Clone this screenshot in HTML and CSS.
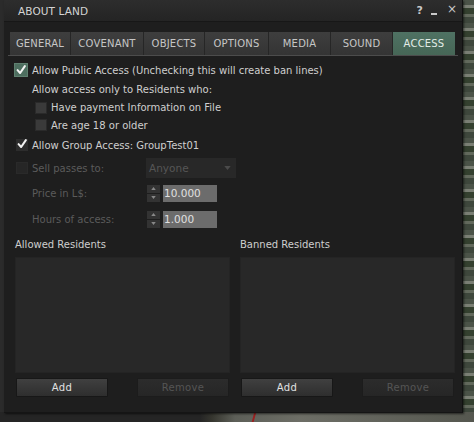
FILE: index.html
```html
<!DOCTYPE html>
<html>
<head>
<meta charset="utf-8">
<link rel="stylesheet" href="styles.css">
</head>
<body>
<div class="scene">
  <div class="floater">
    <div class="titlebar">
      <span class="title">ABOUT LAND</span>
      <div class="title-btns">
        <span class="tb-help">?</span>
        <span class="tb-min"></span>
        <span class="tb-close">×</span>
      </div>
    </div>
    <div class="tabs">
      <div class="tab t-general">GENERAL</div>
      <div class="tab t-covenant">COVENANT</div>
      <div class="tab t-objects">OBJECTS</div>
      <div class="tab t-options">OPTIONS</div>
      <div class="tab t-media">MEDIA</div>
      <div class="tab t-sound">SOUND</div>
      <div class="tab t-access active">ACCESS</div>
    </div>
    <div class="panel">
      <div class="row r-public">
        <span class="cb cb-green"><svg viewBox="0 0 14 14"><path d="M3 7.2 L6 10.5 L11.5 2.5" /></svg></span>
        <span class="lbl">Allow Public Access (Unchecking this will create ban lines)</span>
      </div>
      <div class="row r-only">
        <span class="lbl indent">Allow access only to Residents who:</span>
      </div>
      <div class="row r-pay">
        <span class="cb cb-small"></span>
        <span class="lbl">Have payment Information on File</span>
      </div>
      <div class="row r-age">
        <span class="cb cb-small"></span>
        <span class="lbl">Are age 18 or older</span>
      </div>
      <div class="row r-group">
        <span class="cb cb-dark"><svg viewBox="0 0 14 14"><path d="M3 7.2 L6 10.5 L11.5 2.5" /></svg></span>
        <span class="lbl">Allow Group Access: GroupTest01</span>
      </div>
      <div class="row r-sell">
        <span class="cb cb-disabled"></span>
        <span class="lbl dim fixed">Sell passes to:</span>
        <div class="combo">
          <span>Anyone</span>
          <svg class="caret" viewBox="0 0 8 5"><path d="M0 0 H8 L4 5 Z"/></svg>
        </div>
      </div>
      <div class="row r-price">
        <span class="lbl dim fixed indent">Price in L$:</span>
        <div class="spinner">
          <div class="arrows">
            <span class="arr"><svg viewBox="0 0 6 4"><path d="M0 4 H6 L3 0 Z"/></svg></span>
            <span class="arr"><svg viewBox="0 0 6 4"><path d="M0 0 H6 L3 4 Z"/></svg></span>
          </div>
          <span class="field">10.000</span>
        </div>
      </div>
      <div class="row r-hours">
        <span class="lbl dim fixed indent">Hours of access:</span>
        <div class="spinner">
          <div class="arrows">
            <span class="arr"><svg viewBox="0 0 6 4"><path d="M0 4 H6 L3 0 Z"/></svg></span>
            <span class="arr"><svg viewBox="0 0 6 4"><path d="M0 0 H6 L3 4 Z"/></svg></span>
          </div>
          <span class="field">1.000</span>
        </div>
      </div>
      <div class="lists">
        <div class="list-col">
          <div class="list-title">Allowed Residents</div>
          <div class="list-box"></div>
          <div class="btns">
            <button class="btn">Add</button>
            <button class="btn off">Remove</button>
          </div>
        </div>
        <div class="list-col">
          <div class="list-title">Banned Residents</div>
          <div class="list-box"></div>
          <div class="btns">
            <button class="btn">Add</button>
            <button class="btn off">Remove</button>
          </div>
        </div>
      </div>
    </div>
  </div>
  <div class="world-edge"></div>
</div>
<div class="world-floor"></div>
</body>
</html>
```

FILE: styles.css
```css
html, body {
  margin: 0;
  padding: 0;
}

body {
  width: 474px;
  height: 422px;
  overflow: hidden;
  background: #2b2b2b;
  font-family: "DejaVu Sans", "Liberation Sans", sans-serif;
  font-size: 10px;
  color: #cfcfcf;
}

/* world row: floater plus the blurred scenery strip at its right */
.scene {
  display: flex;
  height: 412px;
  padding-left: 4px;
}

.world-edge {
  flex: 1;
  background: repeating-linear-gradient(180deg,
    #4b5348 0px, #4b5348 5px,
    #7a7f74 5px, #7a7f74 8px,
    #34402f 8px, #34402f 14px,
    #62695c 14px, #62695c 17px,
    #3e473c 17px, #3e473c 23px);
}

/* blurred ground visible below the floater */
.world-floor {
  height: 10px;
  background: linear-gradient(90deg, #252525 0px, #252525 200px, #36362f 212px, #5d5f58 235px, #6d6e66 300px, #55574f 474px);
  position: relative;
}

/* small red streak on the ground */
.world-floor::after {
  content: "";
  position: absolute;
  left: 253px;
  top: 0;
  width: 2px;
  height: 10px;
  background: #9a2020;
  transform: skewX(-15deg);
}

.floater {
  flex: none;
  width: 459px;
  height: 413px;
  background: #1e1e1e;
  border-right: 1px solid #111;
  border-bottom: 1px solid #151515;
  box-sizing: border-box;
  display: flex;
  flex-direction: column;
  position: relative;
  z-index: 1;
  box-shadow: 1px 1px 2px rgba(0, 0, 0, 0.6);
}

/* title bar */
.titlebar {
  height: 22px;
  flex: none;
  display: flex;
  align-items: center;
  justify-content: space-between;
  padding: 0 5px 0 14px;
  background: linear-gradient(180deg, #2d2d2d, #242424);
  border-bottom: 1px solid #171717;
  box-sizing: border-box;
}

.title {
  font-size: 10.5px;
  color: #d4d4d4;
  letter-spacing: 0.1px;
}

.title-btns {
  display: flex;
  align-items: center;
  gap: 8px;
  color: #c8c8c8;
  font-weight: bold;
}

.tb-help {
  font-size: 11px;
}

.tb-min {
  width: 6px;
  height: 2px;
  background: #c8c8c8;
  margin-top: 6px;
}

.tb-close {
  font-size: 12px;
  font-weight: normal;
  margin-top: -4px;
  margin-left: 2px;
}

/* tab strip */
.tabs {
  flex: none;
  display: flex;
  margin: 10px 4px 0 4px;
  height: 24px;
  padding: 0 2px;
  border-bottom: 1px solid #4c4c4c;
  box-sizing: border-box;
}

.tab {
  height: 23px;
  display: flex;
  align-items: center;
  justify-content: center;
  font-size: 10px;
  color: #c6c6c6;
  background: linear-gradient(180deg, #3e3e3e, #343434);
  border-right: 1px solid #262626;
  box-sizing: border-box;
  letter-spacing: 0.2px;
}

.t-general { width: 61px; }
.t-covenant { width: 73px; }
.t-objects { width: 61px; }
.t-options { width: 64px; }
.t-media { width: 62px; }
.t-sound { width: 62px; }
.t-access { width: 62px; }

.tab.active {
  background: linear-gradient(180deg, #4f7263, #466656);
  color: #e2ece6;
  border-right: none;
}

/* access panel */
.panel {
  flex: 1;
  display: flex;
  flex-direction: column;
  padding: 5px 0 0 10px;
}

.row {
  display: flex;
  align-items: center;
}

.r-public { height: 18px; }
.r-only { height: 20px; }
.r-pay { height: 17px; padding-left: 21px; }
.r-age { height: 18px; padding-left: 21px; }
.r-group { height: 22px; padding-left: 2px; }
.r-sell { height: 24px; padding-left: 2px; }
.r-price { height: 26px; }
.r-hours { height: 26px; }

.lbl {
  white-space: nowrap;
}

.indent {
  padding-left: 18px;
}

.dim {
  color: #5b5b5b;
}

.r-sell .fixed { width: 114px; }
.r-price .fixed,
.r-hours .fixed { width: 133px; box-sizing: border-box; }

.cb {
  flex: none;
  display: inline-flex;
  align-items: center;
  justify-content: center;
  box-sizing: border-box;
  margin-right: 4px;
}

.cb svg {
  width: 14px;
  height: 14px;
  fill: none;
  stroke: #f2f2f2;
  stroke-width: 2.4;
  stroke-linecap: round;
  stroke-linejoin: round;
}

.cb-green {
  width: 14px;
  height: 14px;
  background: #4d6e5f;
  border: 1px solid #5f8070;
}

.cb-dark {
  width: 12px;
  height: 12px;
  background: #2d2d2d;
  overflow: visible;
}

.cb-dark svg {
  margin-top: -2px;
}

.cb-small {
  width: 12px;
  height: 12px;
  background: #3a3a3a;
  border: 1px solid #2a2a2a;
}

.cb-disabled {
  width: 12px;
  height: 12px;
  background: #262626;
  border: 1px solid #2a2a2a;
}

/* combo box */
.combo {
  width: 90px;
  height: 20px;
  background: #282828;
  display: flex;
  align-items: center;
  justify-content: space-between;
  padding: 0 5px 0 3px;
  box-sizing: border-box;
  color: #565656;
  font-size: 10.5px;
}

.caret {
  width: 7px;
  height: 4px;
  fill: #4a4a4a;
}

/* numeric spinners */
.spinner {
  display: flex;
  height: 17px;
  gap: 3px;
}

.arrows {
  width: 13px;
  display: flex;
  flex-direction: column;
  gap: 1px;
}

.arr {
  flex: 1;
  background: #333;
  display: flex;
  align-items: center;
  justify-content: center;
}

.arr svg {
  width: 5px;
  height: 3px;
  fill: #888;
}

.field {
  width: 54px;
  background: #6c6c6c;
  color: #e0e0e0;
  font-size: 10.5px;
  display: flex;
  align-items: center;
  padding-left: 1px;
  box-sizing: border-box;
}

/* resident lists */
.lists {
  display: flex;
  gap: 10px;
  margin-top: 2px;
  padding-left: 1px;
}

.list-col {
  width: 215px;
  display: flex;
  flex-direction: column;
}

.list-title {
  height: 21px;
  display: flex;
  align-items: center;
  color: #cfcfcf;
}

.list-box {
  height: 116px;
  margin-top: 2px;
  background: #282828;
  border: 1px solid #242424;
  box-sizing: border-box;
}

.btns {
  display: flex;
  justify-content: space-between;
  margin-top: 5px;
  padding: 0 1px;
}

.btn {
  width: 92px;
  height: 19px;
  font-family: inherit;
  font-size: 10px;
  color: #e2e2e2;
  background: linear-gradient(180deg, #404040, #2e2e2e);
  border: 1px solid #171717;
  border-radius: 1px;
  padding: 0;
  letter-spacing: 0.3px;
}

.btn.off {
  color: #555;
  background: linear-gradient(180deg, #2c2c2c, #262626);
  border-color: #1c1c1c;
}
```
